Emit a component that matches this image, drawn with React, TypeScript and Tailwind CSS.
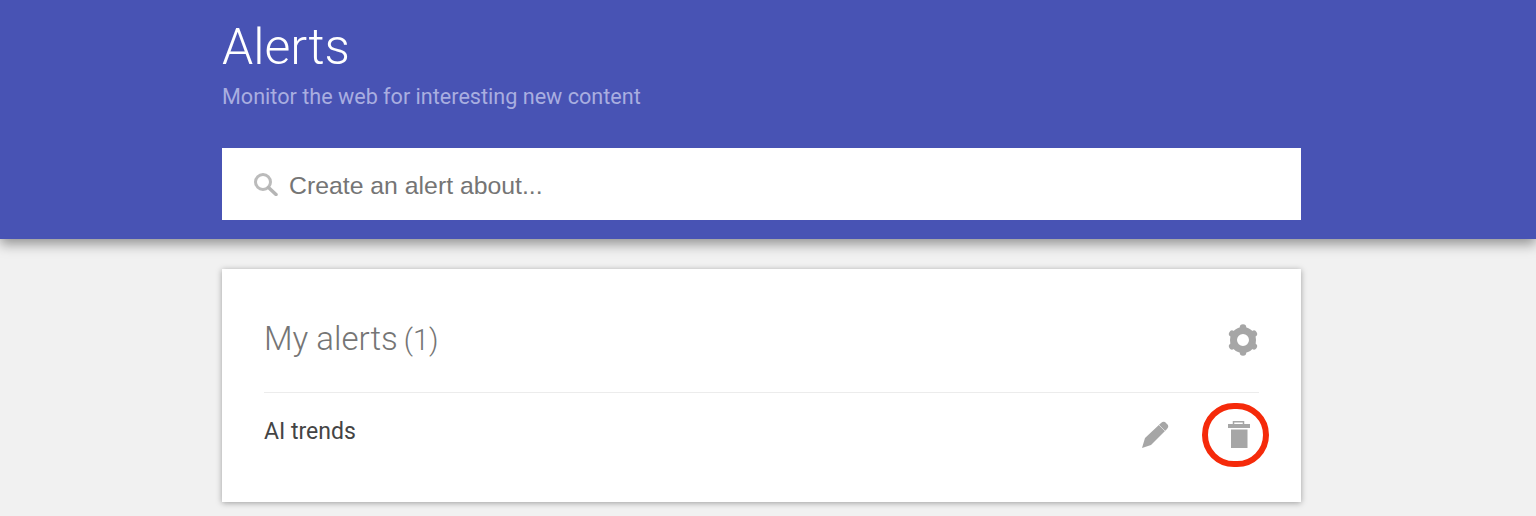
function SearchIcon() {
  return (
    <svg viewBox="0 0 25 24" className="w-[25px] h-[24px]">
      <circle cx="10" cy="10" r="7.5" fill="none" stroke="#bbbbbb" strokeWidth="3" />
      <path d="M15.5 15.5 L23 22.5" fill="none" stroke="#b5b5b5" strokeWidth="3.5" strokeLinecap="round" />
    </svg>
  );
}

function GearIcon() {
  const teeth = [0, 60, 120, 180, 240, 300];
  return (
    <svg viewBox="0 0 32 32" className="w-[32px] h-[32px]">
      <circle cx="16" cy="16" r="9.5" fill="none" stroke="#a6a6a6" strokeWidth="7" />
      {teeth.map((deg) => (
        <path
          key={deg}
          d="M16 6 L16 3.5"
          stroke="#a6a6a6"
          strokeWidth="6.5"
          strokeLinecap="round"
          transform={`rotate(${deg} 16 16)`}
        />
      ))}
    </svg>
  );
}

function PencilIcon() {
  return (
    <svg viewBox="0 0 27 27" className="w-[27px] h-[27px]">
      <path d="M0 27 L3 17 L19 2 Q21 0 23 1 L26 4 Q27 6 25 8 L9 24 Z" fill="#a6a6a6" />
      <path d="M17 4 L23 10" stroke="#d9d9d9" strokeWidth="1" />
    </svg>
  );
}

function TrashIcon() {
  return (
    <svg viewBox="0 0 22 27" className="w-[22px] h-[27px]">
      <path d="M5.5 3.5 V0.8 H15.5 V3.5" fill="none" stroke="#a6a6a6" strokeWidth="1.5" />
      <rect x="0" y="3" width="22" height="4" fill="#a6a6a6" />
      <rect x="3" y="8.5" width="16.5" height="18.5" fill="#a6a6a6" />
    </svg>
  );
}

export default function App() {
  return (
    <div className="h-[516px] overflow-hidden bg-[#f1f1f1] font-['Roboto',sans-serif]">
      <header className="relative z-10 h-[239px] bg-[#4853b4] shadow-[0_5px_12px_rgba(0,0,0,0.4)]">
        <div className="w-[1079px] ml-[222px] pt-[17px]">
          <h1 className="text-[50px] leading-[60px] font-light text-white">Alerts</h1>
          <p className="mt-[2px] text-[21.6px] leading-[36px] text-[#a9aee0]">
            Monitor the web for interesting new content
          </p>
          <div className="flex items-center gap-[11px] h-[72px] mt-[33px] pl-[31px] bg-white">
            <SearchIcon />
            <span className="pt-[3px] font-['Liberation_Sans',sans-serif] text-[24.8px] text-[#757575]">
              Create an alert about...
            </span>
          </div>
        </div>
      </header>

      <section className="w-[1079px] h-[233px] ml-[222px] mt-[30px] px-[42px] bg-white shadow-[0_1px_6px_rgba(0,0,0,0.35)]">
        <div className="flex items-center justify-between h-[124px] pt-[17px] border-b border-[#ececec]">
          <h2 className="text-[33px] font-light text-[#757575]">
            My alerts<span className="ml-[6px] text-[29px]">(1)</span>
          </h2>
          <div className="mt-[1px]">
            <GearIcon />
          </div>
        </div>
        <div className="flex items-start justify-between pt-[22px]">
          <p className="mt-[2px] text-[23px] leading-[30px] text-[#444444]">AI trends</p>
          <div className="flex items-start gap-[59px] mr-[9px] mt-[6px]">
            <PencilIcon />
            <div className="relative">
              <TrashIcon />
              <span className="absolute left-[-26px] top-[-18px] w-[67px] h-[64px] rounded-full border-[6px] border-[#f52a0a]" />
            </div>
          </div>
        </div>
      </section>
    </div>
  );
}
